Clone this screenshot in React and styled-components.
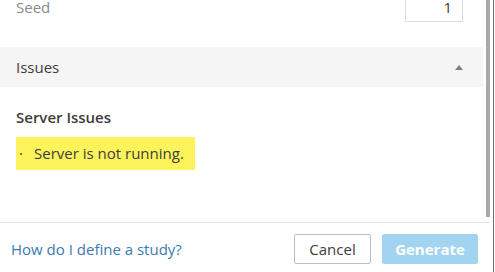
import React from "react";
import styled, { createGlobalStyle } from "styled-components";

const GlobalStyle = createGlobalStyle`
  *, *::before, *::after {
    box-sizing: border-box;
  }
  body {
    margin: 0;
    background: #fff;
    font-family: "Open Sans", "Noto Sans", sans-serif;
  }
`;

const Dialog = styled.div`
  width: 494px;
  height: 272px;
  border-right: 1px solid #6b6b6b;
  display: flex;
  flex-direction: column;
  background: #fff;
  overflow: hidden;
`;

const Body = styled.div`
  flex: 1;
  display: flex;
  min-height: 0;
`;

const Content = styled.div`
  width: 483px;
  overflow: hidden;
`;

const Scroller = styled.div`
  margin-top: -7px;
`;

const Track = styled.div`
  flex: 1;
  display: flex;
  justify-content: center;
  padding-right: 1px;
`;

const Thumb = styled.div`
  width: 4px;
  height: 217px;
  background: #a8a8a8;
`;

const FieldRow = styled.div`
  display: flex;
  align-items: flex-start;
  justify-content: space-between;
  padding: 0 20px 0 16px;
  height: 54px;
`;

const Label = styled.span`
  font-size: 15px;
  color: #8a8a8a;
  line-height: 28px;
`;

const NumberBox = styled.div`
  width: 58px;
  height: 29px;
  border: 1px solid #dcdcdc;
  font-size: 15px;
  color: #3c3c3c;
  text-align: right;
  padding-right: 10px;
  line-height: 27px;
`;

const SectionHeader = styled.div`
  height: 40px;
  background: #f5f5f5;
  display: flex;
  align-items: center;
  justify-content: space-between;
  padding: 0 20px 0 16px;
  font-size: 15px;
  color: #3c3c3c;
`;

const Caret = styled.span`
  width: 0;
  height: 0;
  border-left: 4px solid transparent;
  border-right: 4px solid transparent;
  border-bottom: 5px solid #808080;
`;

const SectionBody = styled.div`
  padding: 20px 16px;
`;

const SubTitle = styled.div`
  font-size: 15px;
  font-weight: 600;
  color: #3c3c3c;
  line-height: 21px;
  margin-bottom: 9px;
`;

const Highlight = styled.ul`
  display: inline-block;
  margin: 0;
  padding: 7px 11px 7px 3px;
  background: #fcf45a;
  list-style: none;
`;

const Item = styled.li`
  font-size: 15px;
  color: #3c3c3c;
  line-height: 19px;
  &::before {
    content: "·";
    display: inline-block;
    width: 15px;
  }
`;

const Footer = styled.div`
  height: 50px;
  border-top: 1px solid #e3e3e3;
  margin-right: 3px;
  display: flex;
  align-items: center;
  justify-content: space-between;
  padding: 2px 12px 0 11px;
`;

const HelpLink = styled.a`
  font-size: 15px;
  color: #3d7ab3;
  text-decoration: none;
`;

const Actions = styled.div`
  display: flex;
  gap: 11px;
`;

const Button = styled.button`
  font-family: "Open Sans", "Noto Sans", sans-serif;
  font-size: 15px;
  height: 30px;
  padding: 0 12px;
  width: ${(p) => (p.$primary ? "96px" : "77px")};
  border-radius: 2px;
  border: 1px solid ${(p) => (p.$primary ? "#a3d4ef" : "#bdbdbd")};
  background: ${(p) => (p.$primary ? "#a3d4ef" : "#fff")};
  color: ${(p) => (p.$primary ? "#fff" : "#3c3c3c")};
  font-weight: ${(p) => (p.$primary ? 700 : 400)};
`;

export default function App() {
  return (
    <>
      <GlobalStyle />
      <Dialog>
        <Body>
          <Content>
            <Scroller>
              <FieldRow>
                <Label>Seed</Label>
                <NumberBox>1</NumberBox>
              </FieldRow>
              <SectionHeader>
                <span>Issues</span>
                <Caret />
              </SectionHeader>
              <SectionBody>
                <SubTitle>Server Issues</SubTitle>
                <Highlight>
                  <Item>Server is not running.</Item>
                </Highlight>
              </SectionBody>
            </Scroller>
          </Content>
          <Track>
            <Thumb />
          </Track>
        </Body>
        <Footer>
          <HelpLink href="#">How do I define a study?</HelpLink>
          <Actions>
            <Button>Cancel</Button>
            <Button $primary disabled>
              Generate
            </Button>
          </Actions>
        </Footer>
      </Dialog>
    </>
  );
}
